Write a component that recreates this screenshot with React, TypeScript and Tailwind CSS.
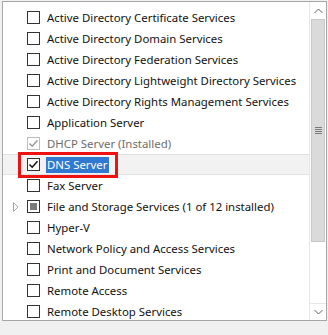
import React from "react";

type Item = {
  label: string;
  state: "off" | "on" | "installed" | "partial";
  expand?: boolean;
  selected?: boolean;
};

const items: Item[] = [
  { label: "Active Directory Certificate Services", state: "off" },
  { label: "Active Directory Domain Services", state: "off" },
  { label: "Active Directory Federation Services", state: "off" },
  { label: "Active Directory Lightweight Directory Services", state: "off" },
  { label: "Active Directory Rights Management Services", state: "off" },
  { label: "Application Server", state: "off" },
  { label: "DHCP Server (Installed)", state: "installed" },
  { label: "DNS Server", state: "on", selected: true },
  { label: "Fax Server", state: "off" },
  { label: "File and Storage Services (1 of 12 installed)", state: "partial", expand: true },
  { label: "Hyper-V", state: "off" },
  { label: "Network Policy and Access Services", state: "off" },
  { label: "Print and Document Services", state: "off" },
  { label: "Remote Access", state: "off" },
  { label: "Remote Desktop Services", state: "off" },
];

const Check = ({ color }: { color: string }) => (
  <svg width="11" height="11" viewBox="0 0 11 11">
    <path d="M1.5 5.5 L4.2 8.2 L9.5 2.2" fill="none" stroke={color} strokeWidth="1.5" />
  </svg>
);

const Box = ({ state }: { state: Item["state"] }) => (
  <div
    className={
      "w-[13px] h-[13px] border flex items-center justify-center bg-white " +
      (state === "installed" ? "border-[#bcbcbc]" : "border-[#333333]")
    }
  >
    {state === "on" && <Check color="#111111" />}
    {state === "installed" && <Check color="#9a9a9a" />}
    {state === "partial" && <div className="w-[7px] h-[7px] bg-[#7a7a7a]" />}
  </div>
);

const Row = ({ item }: { item: Item }) => (
  <div
    className={
      "relative h-[21px] flex items-center " +
      (item.selected ? "bg-[#f2f2f2] border-y border-[#e1e1e1]" : "")
    }
  >
    <div className="w-[24px] flex justify-center pl-[2px]">
      {item.expand && (
        <svg width="6" height="10" viewBox="0 0 6 10">
          <path d="M0.5 0.5 L5 5 L0.5 9.5 Z" fill="none" stroke="#a6a6a6" strokeWidth="1" />
        </svg>
      )}
    </div>
    <Box state={item.state} />
    <span
      className={
        "whitespace-nowrap leading-[16px] " +
        (item.state === "installed"
          ? "ml-[7px] text-[#6d6d6d]"
          : item.selected
          ? "ml-[6px] px-[1px] text-white bg-[#3079d0]"
          : "ml-[7px] text-[#111111]")
      }
    >
      {item.label}
    </span>
    {item.selected && (
      <div className="absolute left-[15px] top-[-3px] w-[100px] h-[26px] border-[3px] border-[#ee1111]" />
    )}
  </div>
);

export default function App() {
  return (
    <div
      className="w-[328px] h-[335px] bg-[#f0f0f0] pt-[1px] pl-[2px] overflow-hidden text-[11.4px]"
      style={{ fontFamily: '"Segoe UI", "Noto Sans", sans-serif' }}
    >
      <div className="w-[325px] h-[320px] border border-[#a6a6a6] bg-white flex">
        <div className="flex-1 pt-[5px] overflow-hidden">
          {items.map((it) => (
            <Row key={it.label} item={it} />
          ))}
        </div>
        <div className="w-[17px] flex flex-col border-l border-[#e6e6e6] bg-[#ffffff]">
          <div className="h-[17px] flex items-center justify-center">
            <svg width="9" height="6" viewBox="0 0 9 6">
              <path d="M0.5 5 L4.5 1 L8.5 5" fill="none" stroke="#606060" strokeWidth="1" />
            </svg>
          </div>
          <div className="h-[223px] mx-[1px] bg-[#dadada] border border-[#c8c8c8] flex items-center justify-center">
            <div className="flex flex-col gap-[1px]">
              <div className="w-[7px] h-[1px] bg-[#7a7a7a]" />
              <div className="w-[7px] h-[1px] bg-[#7a7a7a]" />
              <div className="w-[7px] h-[1px] bg-[#7a7a7a]" />
              <div className="w-[7px] h-[1px] bg-[#7a7a7a]" />
            </div>
          </div>
          <div className="flex-1" />
          <div className="h-[17px] flex items-center justify-center border-t border-[#e6e6e6]">
            <svg width="9" height="6" viewBox="0 0 9 6">
              <path d="M0.5 1 L4.5 5 L8.5 1" fill="none" stroke="#606060" strokeWidth="1" />
            </svg>
          </div>
        </div>
      </div>
    </div>
  );
}
